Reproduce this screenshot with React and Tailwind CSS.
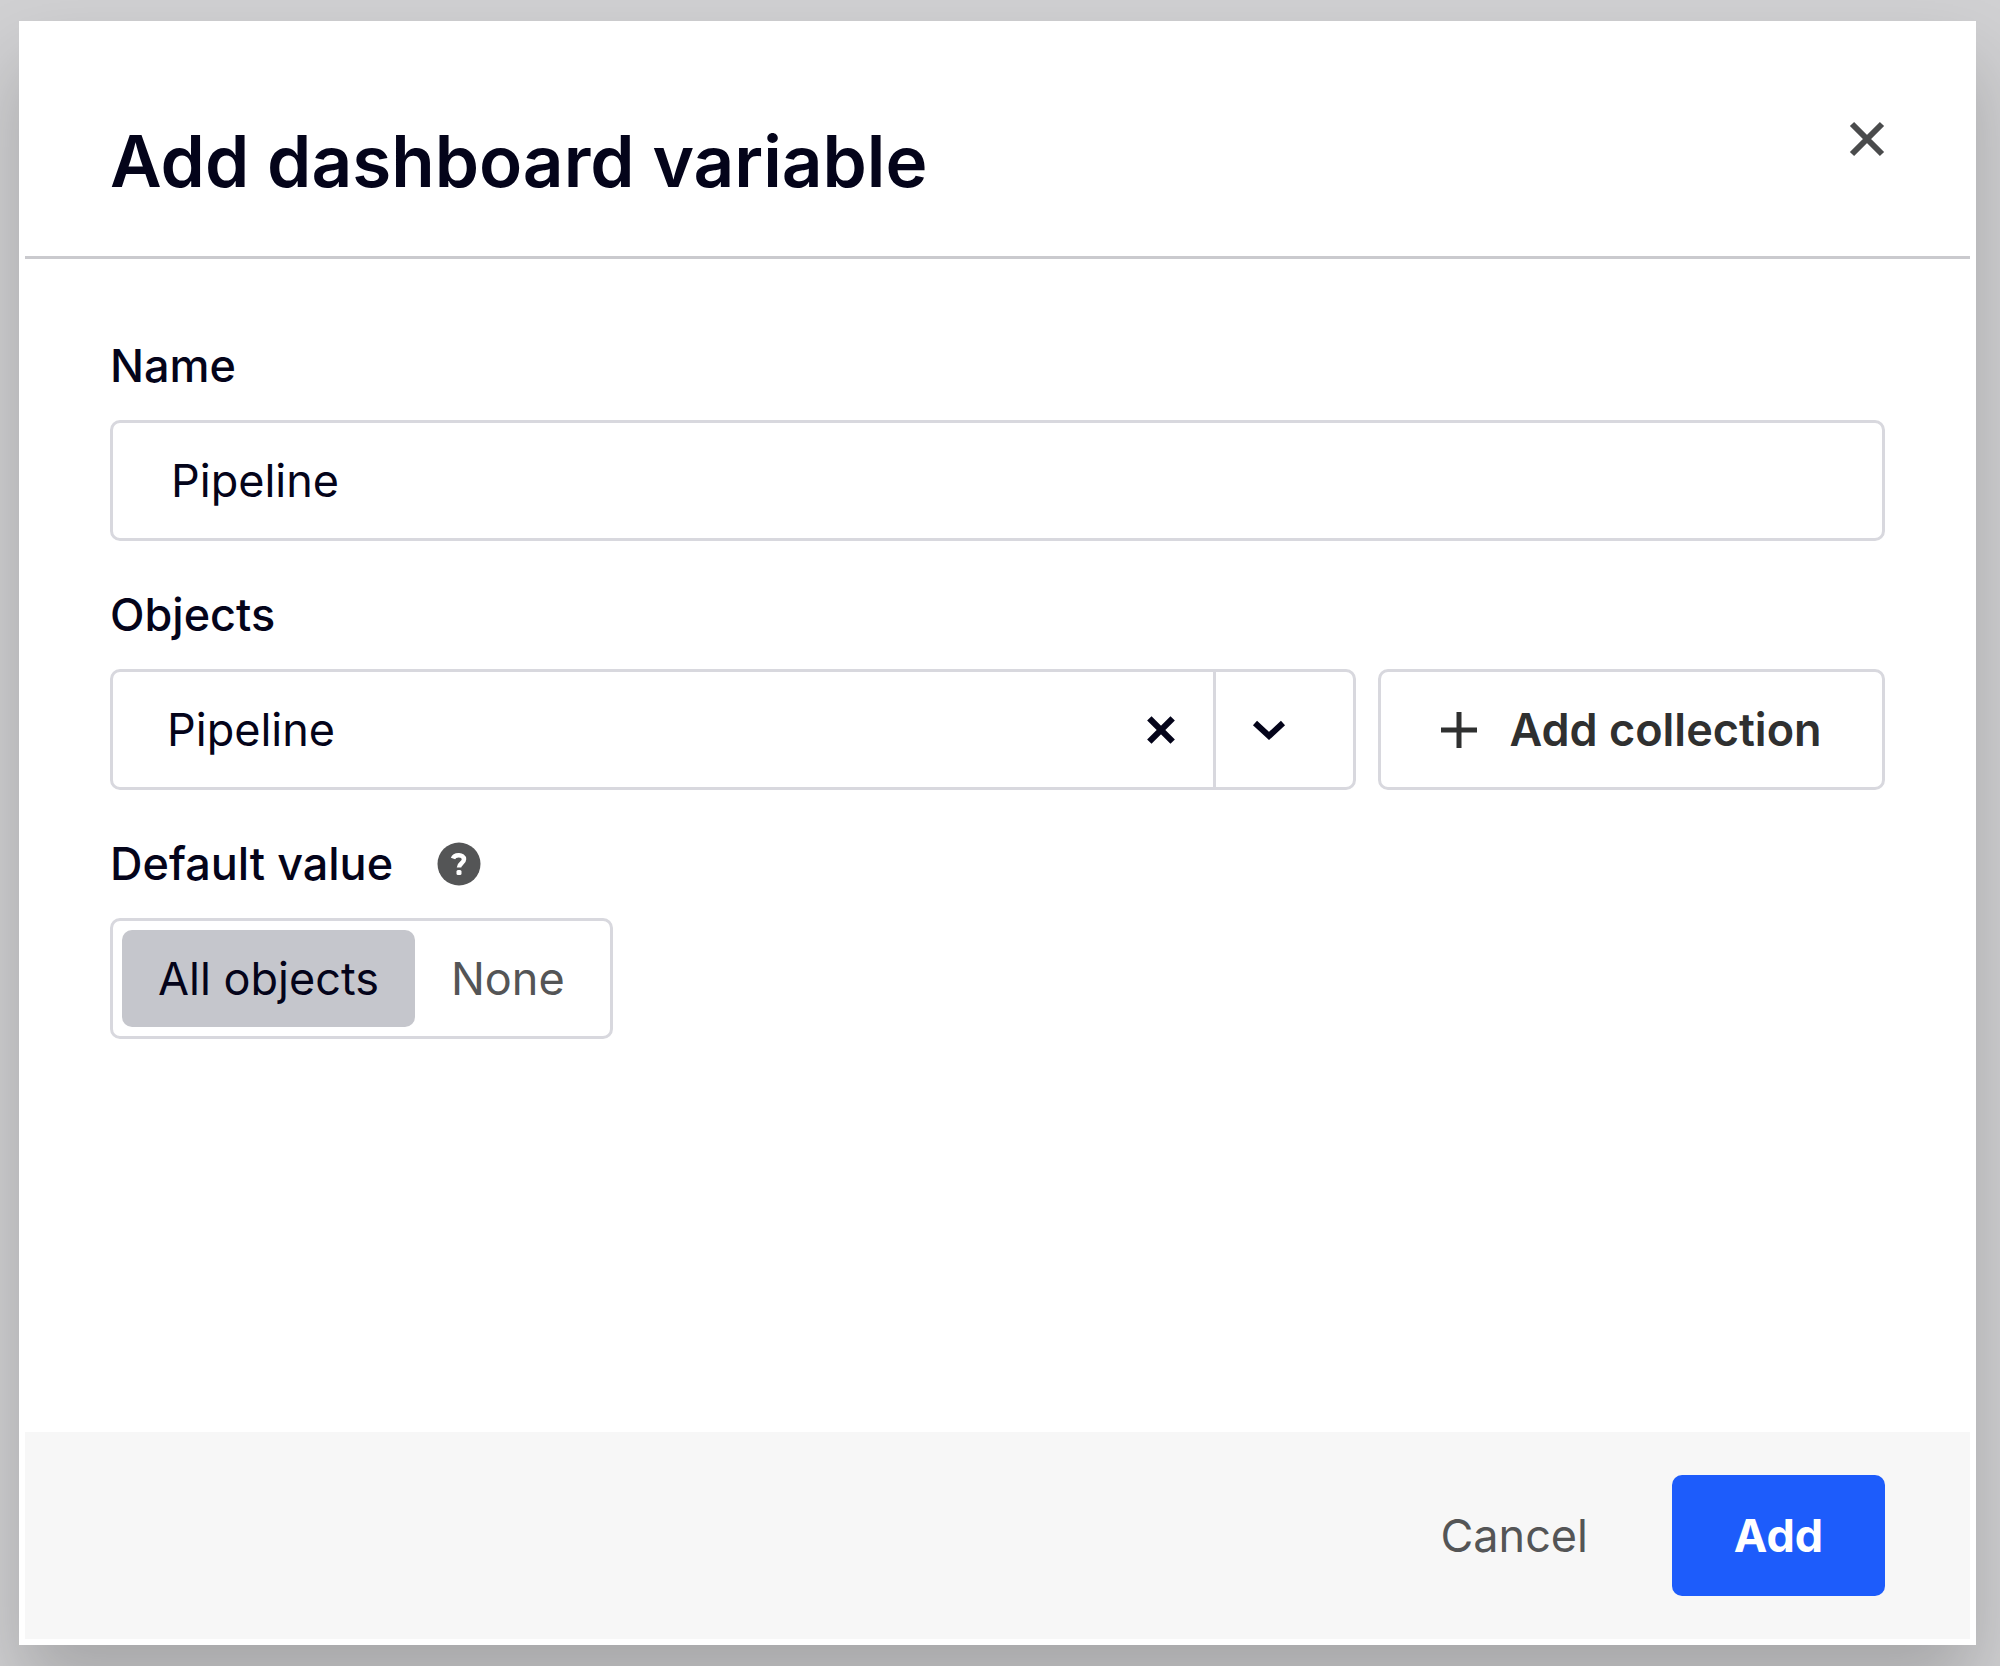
import { useState } from 'react';

const OBJECTS = ['Pipeline', 'Application', 'Host'];

const DEFAULT_VALUES = [
  { id: 'all', label: 'All objects' },
  { id: 'none', label: 'None' },
];

const CrossIcon = ({ className, strokeWidth }) => (
  <svg viewBox="0 0 36 36" className={className} fill="none" stroke="currentColor" strokeWidth={strokeWidth} strokeLinejoin="round" aria-hidden="true">
    <path d="M3 3l30 30M33 3L3 33" />
  </svg>
);

const HelpIcon = () => (
  <svg viewBox="0 0 44 44" className="w-11 h-11 text-[#545556]" aria-hidden="true">
    <circle cx="22" cy="22" r="21.5" fill="currentColor" />
    <path d="M16 16.5c1.5-4.5 11-4.5 11 .7 0 4-5 4-5 8.3" fill="none" stroke="white" strokeWidth="4.5" />
    <rect x="19.5" y="28" width="5" height="5" rx="1.5" fill="white" />
  </svg>
);

export default function App() {
  const [name, setName] = useState('Pipeline');
  const [object, setObject] = useState('Pipeline');
  const [defaultValue, setDefaultValue] = useState('all');

  return (
    <div className="min-h-screen flex flex-col pl-[19px] pr-6 py-[21px] bg-[#d0d0d2] font-['Inter',sans-serif] text-[45px] leading-[52px] text-[#04041a]">
      <form
        role="dialog"
        aria-labelledby="dialog-title"
        onSubmit={(e) => e.preventDefault()}
        className="flex-1 flex flex-col bg-white border-[6px] border-white shadow-[0_44px_72px_rgba(0,0,0,0.2)]"
      >
        {/* Header */}
        <header className="flex items-start justify-between px-[85px] pt-[94px] pb-[55px] border-b-[3px] border-[#cacace]">
          <h1 id="dialog-title" className="text-[71px] leading-[80px] font-semibold">Add dashboard variable</h1>
          <button type="button" aria-label="Close" className="text-[#4a4b4c]">
            <CrossIcon className="w-9 h-9" strokeWidth={6} />
          </button>
        </header>

        {/* Fields */}
        <div className="flex-1 flex flex-col gap-12 px-[85px] py-[81px]">
          <div className="flex flex-col gap-7">
            <label htmlFor="name" className="font-medium">Name</label>
            <input
              id="name"
              type="text"
              value={name}
              onChange={(e) => setName(e.target.value)}
              className="w-full h-[121px] px-[58px] border-[3px] border-[#d8d8de] rounded-[10px] outline-none"
            />
          </div>

          <div className="flex flex-col gap-7">
            <label htmlFor="objects" className="font-medium">Objects</label>
            <div className="flex gap-[22px]">
              <div className="flex-1 flex h-[121px] border-[3px] border-[#d8d8de] rounded-[10px]">
                <select
                  id="objects"
                  value={object}
                  onChange={(e) => setObject(e.target.value)}
                  className="flex-1 min-w-0 pl-[54px] appearance-none bg-transparent outline-none"
                >
                  <option value=""></option>
                  {OBJECTS.map((o) => (
                    <option key={o} value={o}>{o}</option>
                  ))}
                </select>
                <button type="button" aria-label="Clear" onClick={() => setObject('')} className="px-[38px]">
                  <CrossIcon className="w-7 h-7" strokeWidth={8} />
                </button>
                <button type="button" aria-label="Show objects" className="w-[140px] pl-9 border-l-[3px] border-[#d8d8de]">
                  <svg viewBox="0 0 34 24" className="w-[34px] h-6" fill="none" stroke="currentColor" strokeWidth="6" aria-hidden="true">
                    <path d="M3 5l14 13L31 5" />
                  </svg>
                </button>
              </div>
              <button
                type="button"
                className="flex items-center justify-center gap-8 w-[507px] h-[121px] border-[3px] border-[#d8d8de] rounded-[10px] font-semibold text-[#2f3030]"
              >
                <svg viewBox="0 0 36 36" className="w-9 h-9" fill="none" stroke="currentColor" strokeWidth="5" aria-hidden="true">
                  <path d="M18 0v36M0 18h36" />
                </svg>
                Add collection
              </button>
            </div>
          </div>

          <fieldset className="flex flex-col">
            <div className="flex items-center gap-11 mb-7">
              <span id="default-label" className="font-medium">Default value</span>
              <HelpIcon />
            </div>
            <div
              role="radiogroup"
              aria-labelledby="default-label"
              className="self-start flex h-[121px] p-[9px] border-[3px] border-[#d8d8de] rounded-[10px]"
            >
              {DEFAULT_VALUES.map((v) => (
                <label
                  key={v.id}
                  className="flex items-center px-9 rounded-[10px] text-[#545556] has-checked:bg-[#c5c6cc] has-checked:text-[#04041a]"
                >
                  <input
                    type="radio"
                    name="default-value"
                    value={v.id}
                    checked={defaultValue === v.id}
                    onChange={() => setDefaultValue(v.id)}
                    className="sr-only"
                  />
                  {v.label}
                </label>
              ))}
            </div>
          </fieldset>
        </div>

        {/* Footer */}
        <footer className="flex items-center justify-end gap-[84px] px-[85px] py-[43px] bg-[#f7f7f7]">
          <button type="button" className="text-[#545556]">Cancel</button>
          <button type="submit" className="w-[213px] h-[121px] rounded-[10px] bg-[#1d5cfb] text-white font-bold">Add</button>
        </footer>
      </form>
    </div>
  );
}
